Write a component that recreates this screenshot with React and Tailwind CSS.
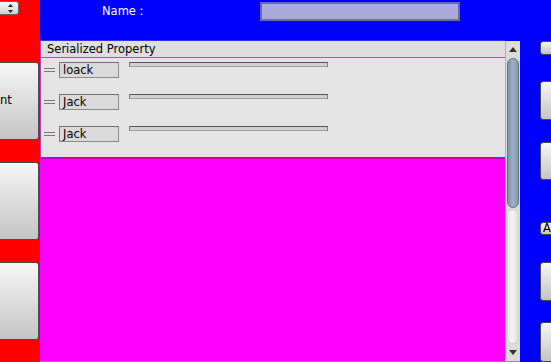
import React from 'react';

// Boutons gris à dégradé, coupés au bord de la fenêtre
const GreyButton = ({ className = '', children }) => (
  <div
    className={`bg-gradient-to-b from-[#f6f6f6] to-[#c4c4c4] border border-[#4a4a4a] flex items-center text-[11.5px] text-black ${className}`}
  >
    {children}
  </div>
);

const rows = ['loack', 'Jack', 'Jack'];

const PropertyRow = ({ value }) => (
  <div className="flex items-start h-[32px]">
    <div className="w-[18px] pl-[3px] pt-[6px] flex flex-col gap-[2px]">
      <div className="w-[11px] h-px bg-[#777]" />
      <div className="w-[11px] h-px bg-[#777]" />
    </div>
    <div className="w-[60px] h-[16px] bg-[#dadada] border border-[#8a8a8a] border-t-[#707070] border-l-[#7a7a7a] text-[11.5px] leading-[14px] pl-[3px] text-black">
      {value}
    </div>
    <div className="ml-[10px] w-[199px] h-[5px] bg-[#d0d0d0] border border-[#7a7a7a] border-t-[#555] border-b-[#a0a0a0]" />
  </div>
);

export default function App() {
  return (
    <div
      className="w-[551px] h-[362px] flex overflow-hidden bg-[#0000ff]"
      style={{ fontFamily: '"DejaVu Sans", sans-serif' }}
    >
      {/* Colonne gauche */}
      <div className="w-[40px] shrink-0 bg-[#ff0000] flex flex-col">
        <div className="mt-px w-[19px] h-[14px] rounded-r-[3px] bg-gradient-to-b from-[#fafafa] to-[#d0d0d0] border border-[#666] border-l-0 flex items-center justify-end pr-[5px]">
          <svg width="5" height="9" viewBox="0 0 5 9">
            <path d="M2.5 0 L5 3 L0 3 Z M0 6 L5 6 L2.5 9 Z" fill="#222" />
          </svg>
        </div>
        <GreyButton className="mt-[47px] h-[78px] w-[39px] rounded-r-[3px] border-l-0 justify-start">
          <span>nt</span>
        </GreyButton>
        <GreyButton className="mt-[22px] h-[78px] w-[39px] rounded-r-[3px] border-l-0" />
        <GreyButton className="mt-[22px] h-[78px] w-[39px] rounded-r-[3px] border-l-0" />
      </div>

      {/* Zone centrale */}
      <div className="flex-1 flex flex-col min-w-0">
        <div className="h-[40px] shrink-0 bg-[#0000ff] flex items-start">
          <span className="ml-[62px] mt-[3px] text-[11.5px] text-white">Name :</span>
          <div className="ml-[117px] mt-[2px] w-[200px] h-[19px] bg-[#aaaadd] border-2 border-[#6a6aa8]" />
        </div>
        <div className="flex-1 flex min-h-0 border-b border-[#a080b0]">
          <div className="flex-1 flex flex-col min-w-0">
            <div className="h-[119px] shrink-0 bg-[#e4e4e4] border-l border-[#c040c0] border-t border-t-[#3030ff] border-b-2 border-b-[#c000c0] flex flex-col">
              <div className="h-[17px] bg-[#dedede] border-b border-[#a855b5] text-[11.5px] leading-[16px] pl-[6px] text-black">
                Serialized Property
              </div>
              <div className="pt-[4px]">
                {rows.map((v, i) => (
                  <PropertyRow key={i} value={v} />
                ))}
              </div>
            </div>
            <div className="flex-1 bg-[#ff00ff]" />
          </div>

          {/* Barre de défilement */}
          <div className="w-[15px] shrink-0 bg-[#dcdcdc] border-l border-[#b0b0b0] flex flex-col mt-px">
            <div className="h-[17px] flex items-center justify-center">
              <svg width="8" height="5" viewBox="0 0 8 5"><path d="M4 0 L8 5 L0 5 Z" fill="#333" /></svg>
            </div>
            <div className="h-[150px] mx-px rounded-[7px] bg-gradient-to-r from-[#7f90a8] via-[#a0b0c6] to-[#8898b0] border border-[#64748c]" />
            <div className="flex-1 mx-px mt-px rounded-[7px] bg-gradient-to-r from-[#e8e8e8] via-[#f4f4f4] to-[#e0e0e0] border border-[#d0d0d0]" />
            <div className="h-[17px] flex items-center justify-center">
              <svg width="8" height="5" viewBox="0 0 8 5"><path d="M0 0 L8 0 L4 5 Z" fill="#333" /></svg>
            </div>
          </div>
        </div>
      </div>

      {/* Colonne droite */}
      <div className="w-[31px] shrink-0 bg-[#0000ff] flex flex-col pl-[20px]">
        <GreyButton className="mt-[41px] h-[14px] w-[12px] rounded-l-[3px] border-r-0" />
        <GreyButton className="mt-[26px] h-[39px] w-[12px] rounded-l-[3px] border-r-0" />
        <GreyButton className="mt-[22px] h-[39px] w-[12px] rounded-l-[3px] border-r-0" />
        <GreyButton className="mt-[42px] h-[13px] w-[12px] rounded-l-[3px] border-r-0 pl-[2px] text-[10px] leading-none">
          A
        </GreyButton>
        <GreyButton className="mt-[27px] h-[39px] w-[12px] rounded-l-[3px] border-r-0" />
        <GreyButton className="mt-[21px] h-[40px] w-[12px] rounded-l-[3px] border-r-0" />
      </div>
    </div>
  );
}
